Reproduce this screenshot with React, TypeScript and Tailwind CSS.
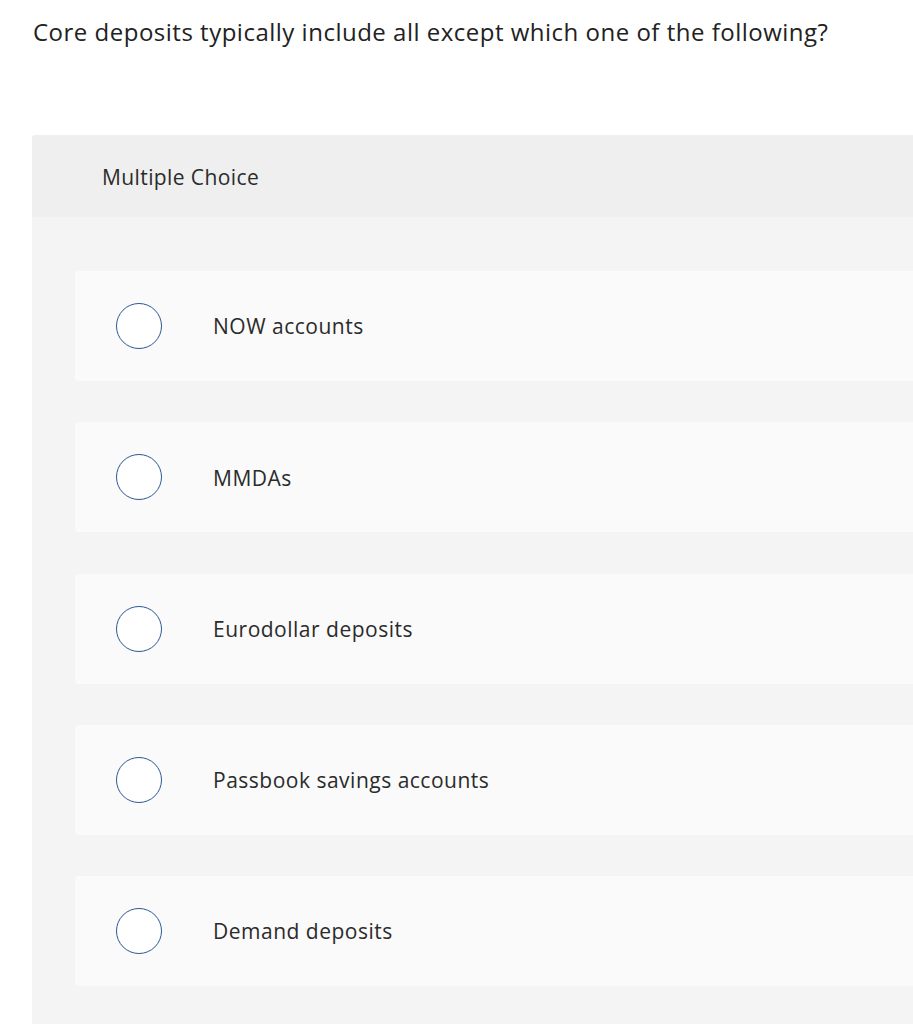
import React from "react";

const options = [
  "NOW accounts",
  "MMDAs",
  "Eurodollar deposits",
  "Passbook savings accounts",
  "Demand deposits",
];

export default function App() {
  return (
    <div
      className="w-[913px] h-[1024px] overflow-hidden bg-white text-[#333333]"
      style={{ fontFamily: "'Open Sans', Arial, sans-serif" }}
    >
      <div className="pl-[33px] pt-[15px] h-[135px]">
        <p className="text-[24px] leading-[34px] tracking-[0.5px] text-[#222222]">
          Core deposits typically include all except which one of the following?
        </p>
      </div>
      <div className="ml-[32px] w-[1000px] rounded-tl-[3px] overflow-hidden">
        <div className="h-[82px] bg-[#efefef] flex items-center pl-[70px] pt-[3px]">
          <span className="text-[21px] tracking-[0.4px] text-[#2b2b2b]">Multiple Choice</span>
        </div>
        <div className="bg-[#f4f4f4] pt-[54px] pb-[60px] pl-[43px] flex flex-col gap-[41.25px]">
          {options.map((o) => (
            <div
              key={o}
              className="h-[110px] bg-[#fafafa] rounded-[4px] flex items-center"
            >
              <div className="ml-[41px] w-[46px] h-[46px] rounded-full border-[1.5px] border-[#2c5895] bg-white shrink-0" />
              <span className="ml-[51px] pt-[2px] text-[21px] tracking-[0.5px] text-[#2b2b2b]">{o}</span>
            </div>
          ))}
        </div>
      </div>
    </div>
  );
}
